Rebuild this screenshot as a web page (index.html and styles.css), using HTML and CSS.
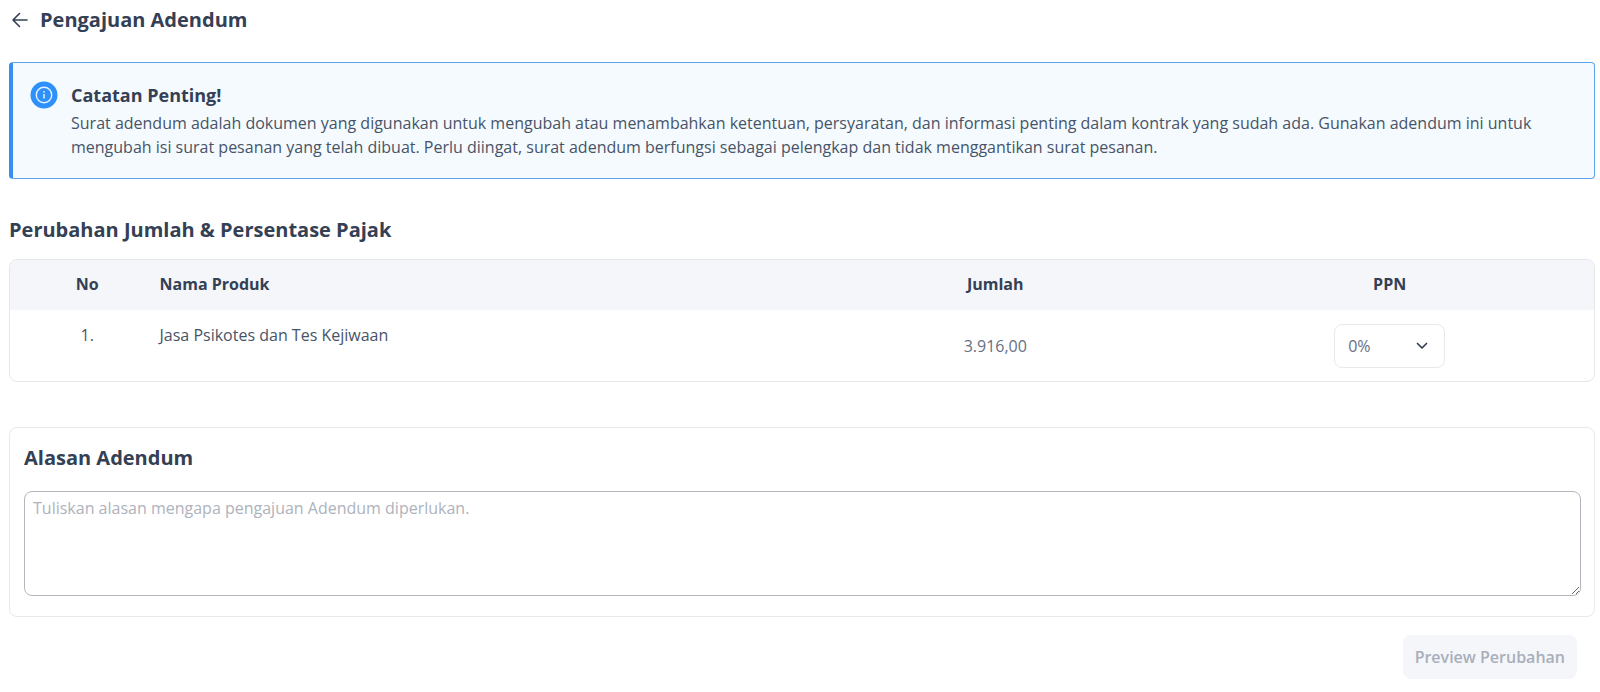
FILE: index.html
```html
<!DOCTYPE html>
<html lang="id">
<head>
<meta charset="utf-8">
<meta name="viewport" content="width=device-width, initial-scale=1">
<title>Pengajuan Adendum</title>
<link rel="stylesheet" href="styles.css">
</head>
<body>
<main class="page">
  <header class="page-header">
    <button class="back" type="button" aria-label="Kembali">
      <svg width="16" height="16" viewBox="0 0 16 16" fill="none" stroke="currentColor" stroke-width="1.6" stroke-linecap="round" stroke-linejoin="round"><path d="M15 8H1M7.500 1.500L1 8l6.500 6.500"/></svg>
    </button>
    <h1 class="title">Pengajuan Adendum</h1>
  </header>

  <section class="note">
    <svg class="note-icon" width="28" height="28" viewBox="0 0 28 28" fill="none"><circle cx="14" cy="14" r="13.500" fill="#2e90fa"/><circle cx="14" cy="14" r="7.700" stroke="#e4f2ff" stroke-width="1.400"/><path d="M14 13v4.600" stroke="#e4f2ff" stroke-width="1.500"/><circle cx="14" cy="10.800" r="0.900" fill="#e4f2ff"/></svg>
    <div>
      <h2 class="note-title">Catatan Penting!</h2>
      <p class="note-text">Surat adendum adalah dokumen yang digunakan untuk mengubah atau menambahkan ketentuan, persyaratan, dan informasi penting dalam kontrak yang sudah ada. Gunakan adendum ini untuk mengubah isi surat pesanan yang telah dibuat. Perlu diingat, surat adendum berfungsi sebagai pelengkap dan tidak menggantikan surat pesanan.</p>
    </div>
  </section>

  <section class="changes">
    <h2 class="title">Perubahan Jumlah &amp; Persentase Pajak</h2>
    <div class="table-frame">
      <table class="products">
        <colgroup><col class="col-no"><col><col class="col-qty"><col class="col-tax"></colgroup>
        <thead>
          <tr><th class="no">No</th><th class="name">Nama Produk</th><th>Jumlah</th><th>PPN</th></tr>
        </thead>
        <tbody>
          <tr>
            <td class="no">1.</td>
            <td class="name">Jasa Psikotes dan Tes Kejiwaan</td>
            <td>3.916,00</td>
            <td>
              <span class="select">
                <select aria-label="PPN"><option>0%</option><option>11%</option><option>12%</option></select>
                <svg class="chevron" width="12" height="8" viewBox="0 0 12 8" fill="none" stroke="currentColor" stroke-width="1.700" stroke-linecap="round" stroke-linejoin="round"><path d="M1.500 1.500L6 6l4.500-4.500"/></svg>
              </span>
            </td>
          </tr>
        </tbody>
      </table>
    </div>
  </section>

  <section class="reason">
    <h2 class="title"><label for="reason">Alasan Adendum</label></h2>
    <textarea id="reason" class="reason-input" rows="4" placeholder="Tuliskan alasan mengapa pengajuan Adendum diperlukan."></textarea>
  </section>

  <footer class="actions">
    <button class="preview" type="button" disabled>Preview Perubahan</button>
  </footer>
</main>
</body>
</html>
```
FILE: styles.css
```css
* {
  box-sizing: border-box;
}

body {
  margin: 0;
  background: #fff;
  color: #475467;
  font: 16px/24px "Open Sans", "Noto Sans", sans-serif;
}

h1, h2, p {
  margin: 0;
}

button, select, textarea {
  font: inherit;
}

.page {
  padding: 6px 5px 12px 9px;
}

.page-header {
  display: flex;
  align-items: center;
  gap: 12px;
  padding-left: 3px;
}

.back {
  display: flex;
  padding: 0;
  border: 0;
  background: none;
  color: #344054;
}

.title {
  color: #344054;
  font-size: 20px;
  font-weight: 700;
  line-height: 28px;
}

.note {
  display: flex;
  gap: 13px;
  margin-top: 28px;
  padding: 18px 24px 19px 17px;
  border: 1px solid #5ea3ee;
  border-left: 4px solid #3a8eed;
  border-radius: 4px;
  background: #f5faff;
}

.note-icon {
  flex: none;
}

.note-title {
  margin-bottom: 2px;
  color: #344054;
  font-size: 18px;
  font-weight: 700;
  line-height: 28px;
}

.changes {
  margin-top: 37px;
}

.table-frame {
  margin-top: 15px;
  overflow: hidden;
  border: 1px solid #e4e6ea;
  border-radius: 8px;
}

.products {
  width: 100%;
  border-collapse: collapse;
  table-layout: fixed;
}

.col-no {
  width: 9%;
}

.col-qty {
  width: 24%;
}

.col-tax {
  width: 25.8%;
}

.products th {
  padding: 12px 0 14px;
  background: #f4f6fa;
  color: #344054;
  font-weight: 700;
}

.products td {
  padding: 14px 0 13px;
  color: #667085;
  text-align: center;
}

.products .no {
  padding-left: 12px;
}

.products .name {
  padding-left: 7px;
  text-align: left;
}

.products td.no,
.products td.name {
  padding-top: 13px;
  color: #475467;
  vertical-align: top;
}

.select {
  position: relative;
  display: block;
  width: 111px;
  margin: 0 auto;
}

.select select {
  display: block;
  width: 100%;
  height: 44px;
  padding: 0 36px 0 13px;
  appearance: none;
  border: 1px solid #e8e9ec;
  border-radius: 8px;
  background: #fff;
  color: #667085;
}

.chevron {
  position: absolute;
  top: 18px;
  right: 17px;
  color: #344054;
  pointer-events: none;
}

.reason {
  margin-top: 45px;
  padding: 16px 13px 20px 14px;
  border: 1px solid #e8e9ec;
  border-radius: 8px;
}

.reason-input {
  display: block;
  width: 100%;
  height: 105px;
  margin-top: 19px;
  padding: 4px 8px;
  border: 1px solid #b4b8be;
  border-radius: 8px;
  color: #475467;
}

.reason-input::placeholder {
  color: #aeb2bc;
}

.actions {
  display: flex;
  justify-content: flex-end;
  margin-top: 18px;
  padding-right: 18px;
}

.preview {
  padding: 10px 12px;
  border: 0;
  border-radius: 8px;
  background: #f4f6fa;
  color: #a9afba;
  font-weight: 600;
}
```
